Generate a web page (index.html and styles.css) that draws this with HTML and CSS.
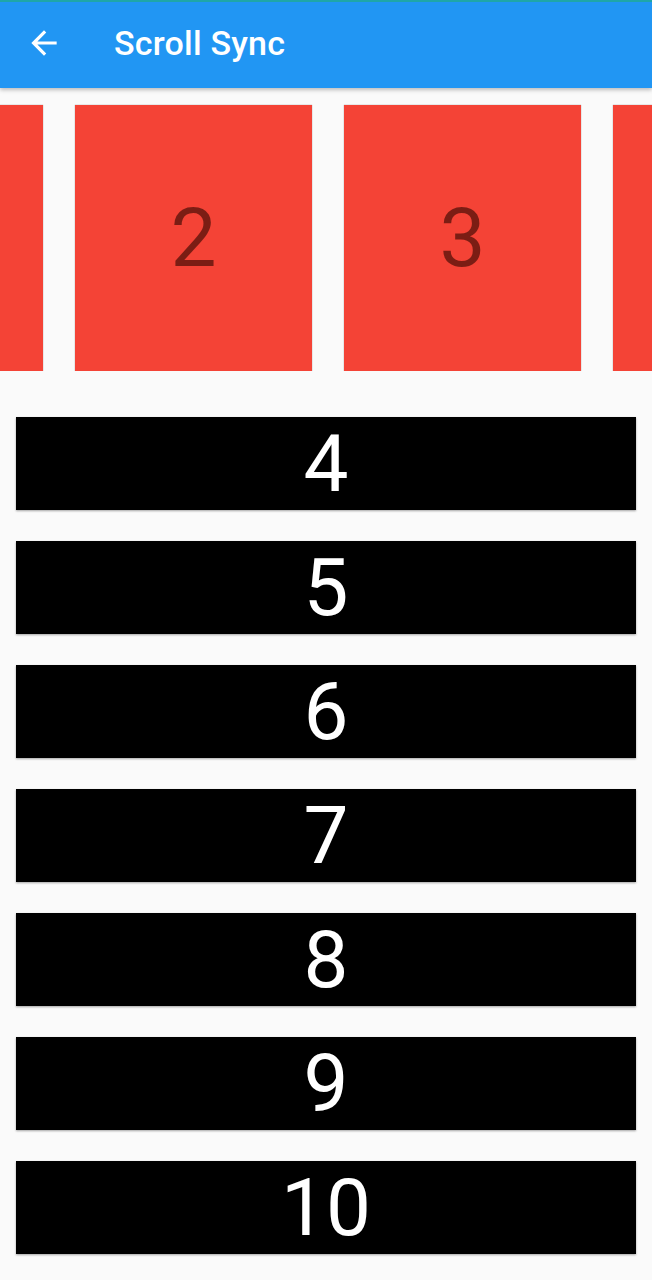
FILE: index.html
```html
<!DOCTYPE html>
<html>
<head>
<meta charset="utf-8">
<link rel="stylesheet" href="styles.css">
</head>
<body>
<header class="appbar">
  <svg class="back" viewBox="0 0 24 24" width="38" height="38"><path fill="#fff" d="M20 11H7.83l5.59-5.59L12 4l-8 8 8 8 1.41-1.41L7.83 13H20v-2z"/></svg>
  <h1 class="title">Scroll Sync</h1>
</header>
<div class="hrow">
  <div class="hstrip">
    <div class="rbox">1</div>
    <div class="rbox">2</div>
    <div class="rbox">3</div>
    <div class="rbox">4</div>
  </div>
</div>
<div class="vlist">
  <div class="bar">4</div>
  <div class="bar">5</div>
  <div class="bar">6</div>
  <div class="bar">7</div>
  <div class="bar">8</div>
  <div class="bar">9</div>
  <div class="bar">10</div>
</div>
</body>
</html>
```
FILE: styles.css
```css
html, body {
  margin: 0;
  padding: 0;
  background: #fafafa;
  font-family: Roboto, "Liberation Sans", sans-serif;
  height: 1280px;
  overflow: hidden;
}
.appbar {
  height: 86px;
  background: #2196f3;
  border-top: 2px solid #1fa6a8;
  display: flex;
  align-items: center;
  box-shadow: 0 2px 4px rgba(0,0,0,0.25);
  position: relative;
  z-index: 1;
}
.back {
  margin-left: 25px;
  margin-top: -4px;
  flex: none;
}
.title {
  margin: -4px 0 0 51px;
  color: #fff;
  font-size: 34px;
  font-weight: 500;
  letter-spacing: 0.2px;
}
.hrow {
  padding-top: 17px;
  height: 266px;
  overflow: hidden;
}
.hstrip {
  display: flex;
  gap: 32px;
  margin-left: -194px;
}
.rbox {
  flex: none;
  width: 237px;
  height: 266px;
  background: #f44336;
  color: #7b1d14;
  font-size: 82px;
  display: flex;
  align-items: center;
  justify-content: center;
  box-shadow: 0 0 1px rgba(0,0,0,0.45);
}
.vlist {
  margin-top: 46px;
  padding: 0 16px;
  display: flex;
  flex-direction: column;
  gap: 31px;
}
.bar {
  height: 93px;
  background: #000;
  color: #fff;
  font-size: 80px;
  display: flex;
  align-items: center;
  justify-content: center;
  box-shadow: 0 1px 2px rgba(0,0,0,0.35);
}
```
